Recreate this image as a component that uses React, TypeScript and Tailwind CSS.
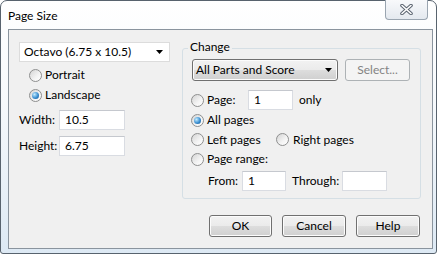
import React from "react";

function Radio({ checked }: { checked?: boolean }) {
  return (
    <span className="w-[13px] h-[13px] rounded-full border border-[#8e8f8f] bg-[linear-gradient(135deg,#d4d4d4,#f4f4f4_60%,#ffffff)] flex items-center justify-center shrink-0">
      {checked && (
        <span className="w-[7px] h-[7px] rounded-full bg-[radial-gradient(circle_at_35%_35%,#c4ecff,#3b8fd1_55%,#0f4f8c)]" />
      )}
    </span>
  );
}

function Arrow() {
  return (
    <svg width="7" height="4" viewBox="0 0 7 4" className="shrink-0">
      <polygon points="0,0 7,0 3.5,4" fill="#000" />
    </svg>
  );
}

function TextBox({ w, value }: { w: string; value?: string }) {
  return (
    <div
      className={`${w} h-[20px] bg-white border border-[#d9dce2] border-t-[#c5c8ce] pl-[5px] flex items-center text-[12px] leading-[14px]`}
    >
      {value}
    </div>
  );
}

function Btn({ w, label, cls = "" }: { w: string; label: string; cls?: string }) {
  return (
    <div
      className={`${w} ${cls} h-[22px] rounded-[3px] border border-[#707070] bg-[linear-gradient(180deg,#f2f2f2_0%,#ebebeb_48%,#dddddd_52%,#cfcfcf_100%)] shadow-[inset_0_0_0_1px_#fcfcfc] flex items-center justify-center`}
    >
      {label}
    </div>
  );
}

export default function App() {
  return (
    <div className="w-[439px] h-[256px] bg-white font-['Lato','Liberation_Sans',sans-serif] text-[12px] leading-[14px] text-black">
      <div className="w-[437px] h-[254px] border border-[#58636e] rounded-t-[7px] rounded-b-[3px] bg-[linear-gradient(180deg,#ffffff_0%,#f6f9fc_40%,#dde9f4_100%)] flex flex-col relative">
        {/* title bar */}
        <div className="h-[28px] relative">
          <span className="absolute left-[7px] top-[8px] text-[12px]">Page Size</span>
          <div className="absolute right-[8px] top-[-1px] w-[43px] h-[20px] rounded-b-[4px] border border-[#9aa5b0] border-t-0 bg-[linear-gradient(180deg,#f8f9fb,#e4e9ef)] flex items-center justify-center">
            <svg width="13" height="11" viewBox="0 0 13 11">
              <path d="M2 1.5 L11 9.5 M11 1.5 L2 9.5" stroke="#5b6470" strokeWidth="3.6" strokeLinecap="round" />
              <path d="M2 1.5 L11 9.5 M11 1.5 L2 9.5" stroke="#ffffff" strokeWidth="1.6" strokeLinecap="round" />
            </svg>
          </div>
        </div>
        {/* client area */}
        <div className="ml-[7px] w-[425px] h-[220px] border border-[#8a949e] bg-[#f0f0f0] flex">
          {/* left column */}
          <div className="ml-[10px] mt-[12px] w-[151px] flex flex-col">
            <div className="h-[20px] bg-white border border-[#dcdcdc] flex items-center pl-[4px] pr-[6px] justify-between">
              <span>Octavo (6.75 x 10.5)</span>
              <Arrow />
            </div>
            <div className="mt-[3px] h-[20px] flex items-center pl-[10px] gap-[3px]">
              <Radio />
              <span>Portrait</span>
            </div>
            <div className="h-[20px] flex items-center pl-[10px] gap-[3px]">
              <Radio checked />
              <span>Landscape</span>
            </div>
            <div className="mt-[5px] flex items-center">
              <span className="w-[40px]">Width:</span>
              <TextBox w="w-[66px]" value="10.5" />
            </div>
            <div className="mt-[6px] flex items-center">
              <span className="w-[40px]">Height:</span>
              <TextBox w="w-[66px]" value="6.75" />
            </div>
          </div>
          {/* right column */}
          <div className="ml-[12px] w-[239px] flex flex-col">
            <div className="mt-[18px] relative border border-[#d5dfe5] rounded-[3px] pl-[8px] pt-[10px] pb-[7px]">
              <span className="absolute left-[5px] top-[-9px] px-[2px] bg-[#f0f0f0]">Change</span>
              <div className="flex items-center">
                <div className="ml-[1px] w-[146px] h-[22px] rounded-[3px] border border-[#707070] bg-[linear-gradient(180deg,#f2f2f2_0%,#ebebeb_48%,#dddddd_52%,#cfcfcf_100%)] shadow-[inset_0_0_0_1px_#fcfcfc] flex items-center justify-between pl-[3px] pr-[5px]">
                  <span>All Parts and Score</span>
                  <Arrow />
                </div>
                <div className="ml-[7px] w-[65px] h-[22px] rounded-[3px] border border-[#adb2b5] bg-[#f4f4f4] text-[#838383] flex items-center justify-center">
                  Select...
                </div>
              </div>
              <div className="mt-[9px] h-[20px] flex items-center">
                <Radio />
                <span className="ml-[3px] w-[41px]">Page:</span>
                <TextBox w="w-[45px]" value="1" />
                <span className="ml-[6px]">only</span>
              </div>
              <div className="h-[20px] flex items-center">
                <Radio checked />
                <span className="ml-[3px]">All pages</span>
              </div>
              <div className="h-[19px] flex items-center">
                <Radio />
                <span className="ml-[3px] w-[69px]">Left pages</span>
                <Radio />
                <span className="ml-[4px]">Right pages</span>
              </div>
              <div className="h-[20px] flex items-center">
                <Radio />
                <span className="ml-[3px]">Page range:</span>
              </div>
              <div className="mt-[2px] flex items-center pl-[17px]">
                <span className="w-[34px]">From:</span>
                <TextBox w="w-[44px]" value="1" />
                <span className="ml-[6px] w-[50px]">Through:</span>
                <TextBox w="w-[45px]" />
              </div>
            </div>
            <div className="mt-[16px] flex justify-end pr-[1px]">
              <Btn w="w-[63px]" label="OK" />
              <Btn w="w-[64px]" label="Cancel" cls="ml-[10px]" />
              <Btn w="w-[64px]" label="Help" cls="ml-[10px]" />
            </div>
          </div>
        </div>
      </div>
    </div>
  );
}
